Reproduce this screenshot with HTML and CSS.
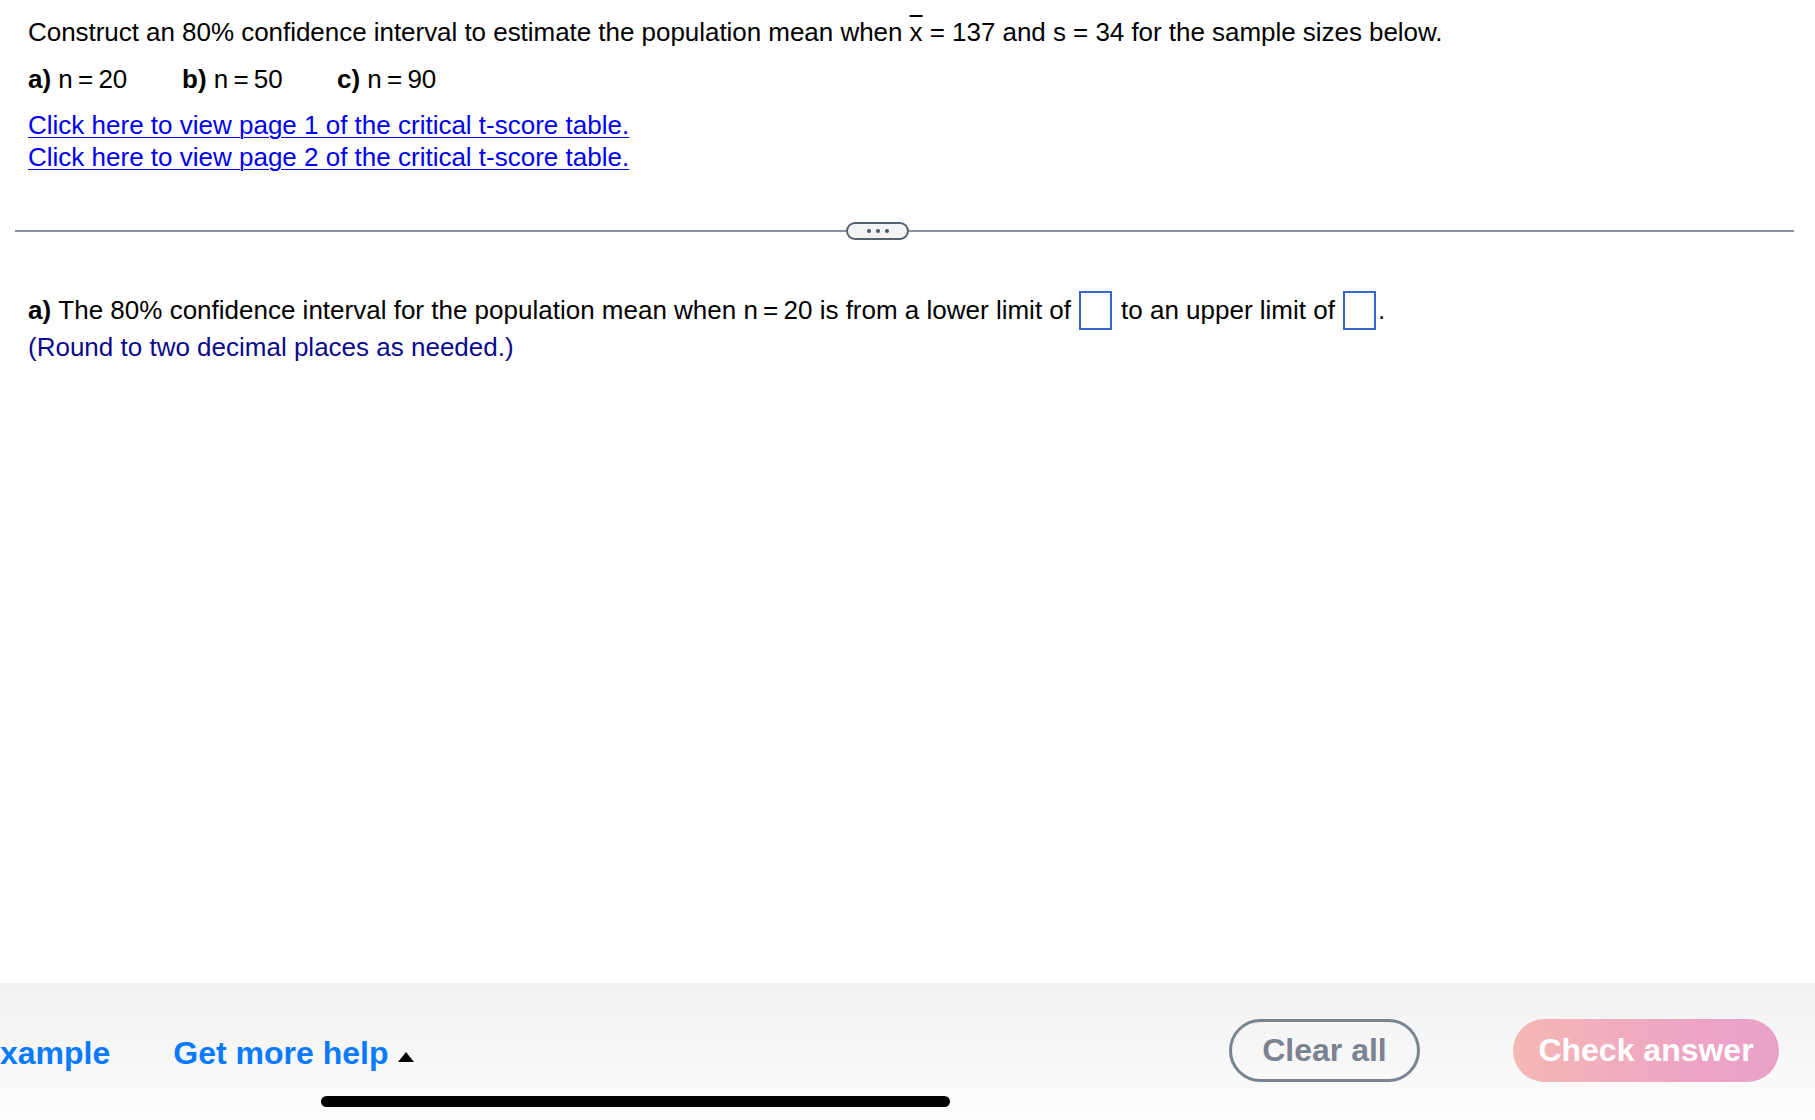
FILE: index.html
```html
<!DOCTYPE html>
<html lang="en">
<head>
<meta charset="utf-8">
<title>Confidence interval</title>
<link rel="stylesheet" href="styles.css">
</head>
<body>
<div class="screen">
  <main class="content">
    <section class="question">
      <p class="intro">Construct an 80% confidence interval to estimate the population mean when <span class="xbar">x</span> = 137 and s = 34 for the sample sizes below.</p>
      <p class="parts"><span class="part"><b>a)</b> n&#8201;=&#8201;20</span><span class="part"><b>b)</b> n&#8201;=&#8201;50</span><span class="part"><b>c)</b> n&#8201;=&#8201;90</span></p>
      <div class="links">
        <a href="#" class="link">Click here to view page 1 of the critical t-score table.</a>
        <a href="#" class="link">Click here to view page 2 of the critical t-score table.</a>
      </div>
    </section>
    <div class="divider">
      <span class="rule rule-left"></span>
      <span class="pill"><i></i><i></i><i></i></span>
      <span class="rule rule-right"></span>
    </div>
    <section class="answer">
      <p class="answer-line"><b>a)</b>&nbsp;The 80% confidence interval for the population mean when n&#8201;=&#8201;20 is from a lower limit of<span class="box"></span>to an upper limit of<span class="box box-last"></span>.</p>
      <p class="hint">(Round to two decimal places as needed.)</p>
    </section>
  </main>
  <footer class="toolbar">
    <div class="toolbar-row">
      <span class="tool-link example">xample</span>
      <span class="tool-link help">Get more help <span class="caret"></span></span>
      <span class="spacer"></span>
      <span class="btn btn-clear">Clear all</span>
      <span class="btn btn-check">Check answer</span>
    </div>
    <div class="home-row"><span class="home-bar"></span></div>
  </footer>
</div>
</body>
</html>
```

FILE: styles.css
```css
* { box-sizing: border-box; }
html, body { margin: 0; padding: 0; background: #fff; }
body {
  font-family: "Liberation Sans", Arial, Helvetica, sans-serif;
  color: #000;
}
.screen {
  width: 1815px;
  height: 1120px;
  display: flex;
  flex-direction: column;
  overflow: hidden;
}
.content { flex: 1; }
p { margin: 0; }

.question {
  padding: 17px 0 0 28px;
  font-size: 26px;
}
.intro { line-height: 30px; letter-spacing: -0.04px; }
.xbar { text-decoration: overline; text-decoration-thickness: 2px; }
.parts {
  margin-top: 17px;
  line-height: 30px;
  display: flex;
}
.part { width: 154px; }
.part:nth-child(2) { width: 155px; }
.links {
  margin-top: 15px;
  display: flex;
  flex-direction: column;
}
.link {
  color: #0000ee;
  line-height: 32px;
  text-decoration: underline;
  text-decoration-thickness: 1px;
  text-underline-offset: 3px;
  align-self: flex-start;
}

.divider {
  margin: 49px 21px 0 15px;
  display: flex;
  align-items: center;
  height: 18px;
}
.rule { height: 2px; background: #8a929e; }
.rule-left { width: 831px; }
.rule-right { flex: 1; }
.pill {
  width: 63px;
  height: 18px;
  border: 2px solid #566270;
  border-radius: 9px;
  background: #f3f4f6;
  display: flex;
  align-items: center;
  justify-content: center;
  gap: 5px;
}
.pill i {
  display: block;
  width: 4px;
  height: 4px;
  border-radius: 50%;
  background: #4b5563;
}

.answer {
  padding: 50px 0 0 28px;
  font-size: 26px;
}
.answer-line {
  line-height: 40px;
  display: flex;
  align-items: center;
  white-space: pre;
}
.box {
  display: block;
  width: 33px;
  height: 39px;
  border: 2px solid #3566d0;
  margin: 0 9px 0 8px;
}
.box-last { margin-right: 2px; }
.hint {
  color: #0a0a8c;
  line-height: 30px;
  margin-top: 2px;
}

.toolbar {
  height: 137px;
  background: linear-gradient(#f1f1f1, #fdfdfd);
  display: flex;
  flex-direction: column;
}
.toolbar-row {
  display: flex;
  align-items: center;
  padding-top: 36px;
  height: 99px;
}
.tool-link {
  color: #0a7aff;
  font-weight: bold;
  font-size: 32px;
  white-space: nowrap;
  margin-top: 6px;
}
.example { margin-left: 0; }
.help { margin-left: 63px; display: flex; align-items: center; }
.caret {
  display: inline-block;
  width: 0;
  height: 0;
  border-left: 8px solid transparent;
  border-right: 8px solid transparent;
  border-bottom: 10px solid #000;
  margin-left: 10px;
  margin-top: 6px;
}
.spacer { flex: 1; }
.btn {
  height: 63px;
  border-radius: 32px;
  display: flex;
  align-items: center;
  justify-content: center;
  font-size: 32px;
  font-weight: bold;
  white-space: nowrap;
}
.btn-clear {
  width: 191px;
  border: 3px solid #7b8290;
  color: #7b8290;
}
.btn-check {
  width: 266px;
  margin-left: 93px;
  margin-right: 36px;
  color: #fff;
  background: linear-gradient(90deg, #f4b8b4, #eea3c6 70%, #e8a2c8);
}
.home-row {
  padding-left: 321px;
  padding-top: 14px;
}
.home-bar {
  display: block;
  width: 629px;
  height: 11px;
  border-radius: 6px;
  background: #000;
}
```
